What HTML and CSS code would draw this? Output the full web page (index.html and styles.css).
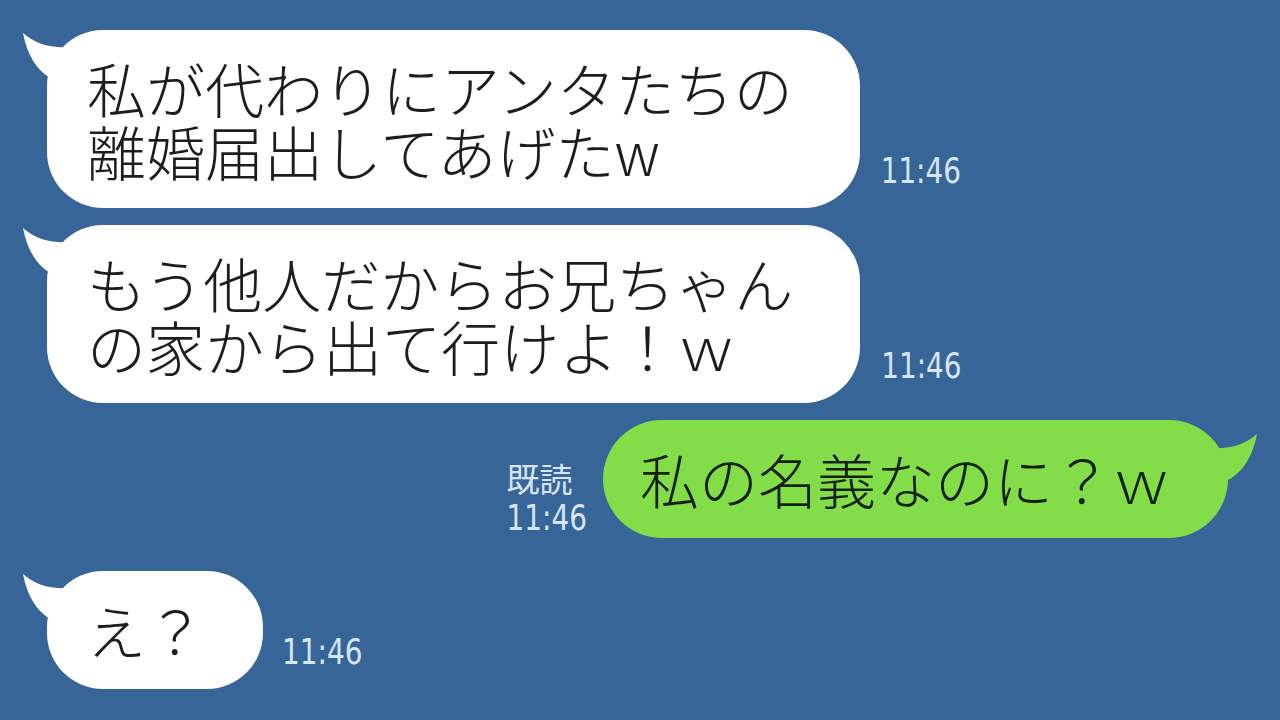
FILE: index.html
```html
<!DOCTYPE html>
<html lang="ja">
<head>
  <meta charset="UTF-8">
  <title>トーク</title>
  <link rel="stylesheet" href="styles.css">
</head>
<body>
  <div class="chat">
    <div class="row">
      <div class="bubble white">
        <svg class="tail" width="64" height="62" viewBox="0 0 64 62"><path d="M2,4 Q20,20 48,18 L64,18 L64,60 L29,49 Q8,36 2,4 Z"/></svg>
        <p>私が代わりにアンタたちの<br>離婚届出してあげたw</p>
      </div>
      <span class="time">11:46</span>
    </div>

    <div class="row second">
      <div class="bubble white">
        <svg class="tail" width="64" height="62" viewBox="0 0 64 62"><path d="M2,4 Q20,20 48,18 L64,18 L64,60 L29,49 Q8,36 2,4 Z"/></svg>
        <p>もう他人だからお兄ちゃん<br>の家から出て行けよ！ｗ</p>
      </div>
      <span class="time">11:46</span>
    </div>

    <div class="row mine">
      <div class="read">
        <span class="read-label">既読</span>
        <span class="time">11:46</span>
      </div>
      <div class="bubble green">
        <svg class="tail" width="64" height="62" viewBox="0 0 64 62"><path d="M2,4 Q20,20 48,18 L64,18 L64,60 L29,49 Q8,36 2,4 Z"/></svg>
        <p>私の名義なのに？ｗ</p>
      </div>
    </div>

    <div class="row last">
      <div class="bubble white short">
        <svg class="tail" width="64" height="62" viewBox="0 0 64 62"><path d="M2,4 Q20,20 48,18 L64,18 L64,60 L29,49 Q8,36 2,4 Z"/></svg>
        <p>え？</p>
      </div>
      <span class="time">11:46</span>
    </div>
  </div>
</body>
</html>
```

FILE: styles.css
```css
body {
  margin: 0;
  width: 1280px;
  height: 720px;
  overflow: hidden;
  background-color: #386598;
  font-family: "Noto Sans CJK JP", "Noto Sans", sans-serif;
}

.chat {
  display: flex;
  flex-direction: column;
  padding: 30px 52px 0 47px;
}

.row {
  display: flex;
  align-items: flex-end;
}

.row.second {
  margin-top: 17px;
}

.row.mine {
  margin-top: 17px;
  justify-content: flex-end;
}

.row.last {
  margin-top: 33px;
}

.bubble {
  position: relative;
  border-radius: 56px;
  padding: 26px 67px 26px 40px;
}

.bubble p {
  position: relative;
  margin: 0;
  font-size: 59px;
  line-height: 63px;
  font-weight: 300;
  color: #1d1d1d;
  white-space: nowrap;
}

.bubble.white {
  background-color: #ffffff;
}

.bubble.white .tail {
  fill: #ffffff;
}

.bubble.short {
  padding: 27px 58px 28px 40px;
}

.bubble.green {
  background-color: #83dd48;
  border-radius: 59px;
  padding: 27px 57px 28px 37px;
}

.bubble.green p {
  color: #15200c;
}

.bubble.green .tail {
  fill: #83dd48;
  left: auto;
  right: -31px;
  top: 10px;
  transform: scaleX(-1);
}

.tail {
  position: absolute;
  left: -26px;
  top: -1px;
}

.time {
  display: inline-block;
  margin: 0 0 20px 21px;
  font-family: "DejaVu Sans Condensed", "DejaVu Sans", sans-serif;
  font-size: 31px;
  line-height: 30px;
  color: #d6e6f7;
  transform: scaleY(1.17);
  transform-origin: bottom left;
}

.row.last .time {
  margin-left: 19px;
}

.read {
  display: flex;
  flex-direction: column;
  align-items: flex-start;
  margin: 0 16px 0 0;
}

.read-label {
  font-size: 33px;
  line-height: 48px;
  color: #d6e6f7;
}

.read .time {
  margin: 0;
  line-height: 36px;
}
```
